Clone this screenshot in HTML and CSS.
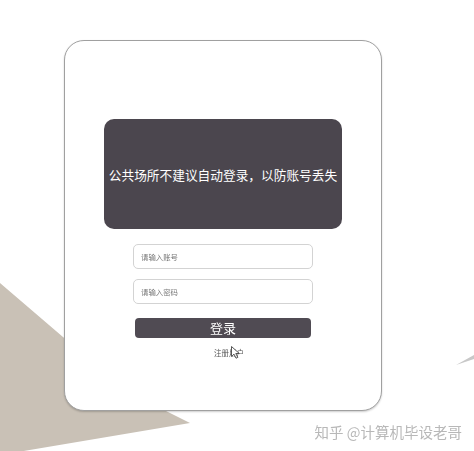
FILE: index.html
```html
<!DOCTYPE html>
<html lang="zh-CN">

<head>
  <meta charset="UTF-8" />
  <meta name="viewport" content="width=device-width, initial-scale=1.0" />
  <title>登录</title>
  <link rel="stylesheet" href="styles.css">
</head>

<body>
  <!-- beige wedge behind the card -->
  <svg class="backdrop" width="474" height="451" viewBox="0 0 474 451">
    <polygon points="0,283 126,391 190,423 0,455" fill="#c9c1b6" />
    <polygon points="456,365 474,355 474,359" fill="#c8c8c8" />
  </svg>

  <div class="login-card">
    <div class="notice">公共场所不建议自动登录，以防账号丢失</div>

    <form class="login-form">
      <input class="field" type="text" placeholder="请输入账号" />
      <input class="field" type="password" placeholder="请输入密码" />
      <button class="login-btn" type="button">登录</button>
      <a class="register" href="#">注册用户
        <svg class="pointer" width="10" height="13" viewBox="0 0 10 13">
          <path d="M0.5 0.5 L0.5 10.5 L3 8.2 L5 12.2 L6.8 11.4 L4.8 7.5 L8.3 7.5 Z" fill="#fff" stroke="#444" stroke-width="0.9" />
        </svg>
      </a>
    </form>
  </div>

  <div class="watermark">知乎 @计算机毕设老哥</div>
</body>

</html>
```

FILE: styles.css
```css
body {
  margin: 0;
  font-family: "Noto Sans CJK SC", "Noto Sans", sans-serif;
  background: #fff;
}

.backdrop {
  position: fixed;
  top: 0;
  left: 0;
  z-index: -1;
}

.login-card {
  box-sizing: border-box;
  width: 318px;
  height: 371px;
  margin: 40px 0 0 64px;
  padding-top: 78px;
  background: #fff;
  border: 1px solid #a0a0a0;
  border-radius: 20px;
  box-shadow: 0 1px 2px rgba(0, 0, 0, 0.2);
}

.notice {
  height: 110px;
  margin: 0 39px;
  display: flex;
  align-items: center;
  justify-content: center;
  background-color: #4b464e;
  border-radius: 10px;
  color: #fff;
  font-size: 12.7px;
  white-space: nowrap;
}

.login-form {
  display: flex;
  flex-direction: column;
  align-items: center;
  margin-top: 15px;
}

.field {
  box-sizing: border-box;
  width: 180px;
  height: 25px;
  margin-bottom: 10px;
  padding: 0 7px;
  border: 1.5px solid #d3d3d3;
  border-radius: 5px;
  font-family: inherit;
  font-size: 7.4px;
  outline: none;
}

.field::placeholder {
  color: #777;
}

.login-btn {
  width: 176px;
  height: 20px;
  margin-top: 4px;
  padding: 0;
  border: none;
  border-radius: 4px;
  background-color: #504b53;
  color: #fff;
  font-family: inherit;
  font-size: 13px;
  line-height: 20px;
  cursor: pointer;
}

.register {
  position: relative;
  margin-top: 10px;
  margin-left: 12px;
  color: #555;
  font-size: 7.5px;
  line-height: 10px;
  text-decoration: none;
}

.pointer {
  position: absolute;
  left: 17px;
  top: -2px;
}

.watermark {
  margin-top: 11px;
  padding-right: 12px;
  text-align: right;
  color: #b8b8b8;
  font-size: 14.5px;
  line-height: 20px;
}
```
